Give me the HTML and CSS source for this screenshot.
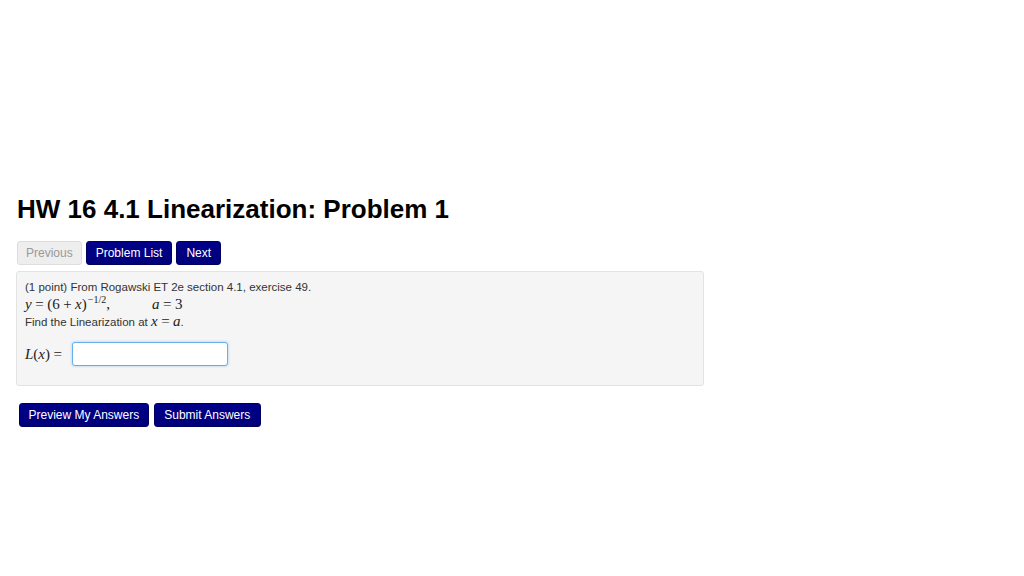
FILE: index.html
```html
<!DOCTYPE html>
<html>
<head>
<meta charset="utf-8">
<link rel="stylesheet" href="styles.css">
</head>
<body>
<div class="page">
  <h1 class="title">HW 16 4.1 Linearization: Problem 1</h1>
  <div class="nav">
    <span class="btn btn-disabled">Previous</span>
    <span class="btn btn-primary">Problem List</span>
    <span class="btn btn-primary">Next</span>
  </div>
  <div class="problem">
    <div class="line">(1 point) From Rogawski ET 2e section 4.1, exercise 49.</div>
    <div class="line math-line"><span class="m"><i>y</i><span class="op">=</span>(6<span class="op">+</span><i>x</i>)<sup>−1/2</sup>,</span><span class="m gap"><i>a</i><span class="op">=</span>3</span></div>
    <div class="line">Find the Linearization at <span class="m"><i>x</i><span class="op">=</span><i>a</i></span>.</div>
    <div class="answer">
      <span class="m lhs"><i>L</i>(<i>x</i>)<span class="op">=</span></span>
      <span class="input"></span>
    </div>
  </div>
  <div class="actions">
    <span class="btn btn-primary">Preview My Answers</span>
    <span class="btn btn-primary btn-submit">Submit Answers</span>
  </div>
</div>
</body>
</html>
```
FILE: styles.css
```css
html, body {
  margin: 0;
  padding: 0;
  background: #ffffff;
  font-family: "Liberation Sans", Arial, sans-serif;
  color: #333333;
}
.page {
  padding: 193px 0 0 16px;
  width: 688px;
}
.title {
  margin: 0 0 0 1px;
  font-size: 26px;
  line-height: 32px;
  font-weight: bold;
  color: #000000;
}
.nav {
  margin-top: 16px;
  display: flex;
  gap: 4px;
  padding-left: 1px;
}
.btn {
  display: inline-block;
  box-sizing: border-box;
  height: 24px;
  line-height: 22px;
  padding: 0 9px;
  font-size: 12px;
  border-radius: 3px;
  border: 1px solid transparent;
  white-space: nowrap;
}
.btn-disabled {
  background: #eeeeee;
  border-color: #dddddd;
  color: #999999;
  padding: 0 8px;
}
.btn-primary {
  background: linear-gradient(#00008a, #00007a);
  border-color: #000060;
  color: #ffffff;
}
.problem {
  margin-top: 6px;
  box-sizing: border-box;
  width: 688px;
  height: 115px;
  background: #f5f5f5;
  border: 1px solid #e3e3e3;
  border-radius: 3px;
  padding: 7px 8px 0 8px;
  font-size: 11.5px;
}
.line {
  line-height: 17px;
  height: 17px;
}
.m {
  font-family: "Liberation Serif", "Times New Roman", serif;
  font-size: 15px;
  color: #222;
}
.op {
  margin: 0 3.5px;
  font-style: normal;
}
.m sup {
  font-size: 10px;
  line-height: 0;
  margin-left: 1px;
}
.gap {
  margin-left: 42px;
}
.answer {
  margin-top: 12px;
  display: flex;
  align-items: center;
  gap: 10px;
}
.lhs {
  font-size: 15px;
}
.lhs .op {
  margin-right: 0;
}
.input {
  display: block;
  box-sizing: border-box;
  width: 156px;
  height: 24px;
  background: #ffffff;
  border: 1px solid #66afe9;
  border-radius: 3px;
  box-shadow: 0 0 3px rgba(102, 175, 233, 0.6);
}
.actions {
  margin-top: 17px;
  padding-left: 3px;
  display: flex;
  gap: 5px;
}
.actions .btn {
  padding: 0 8.5px;
}
.actions .btn-submit {
  padding: 0 9.5px;
}
```
